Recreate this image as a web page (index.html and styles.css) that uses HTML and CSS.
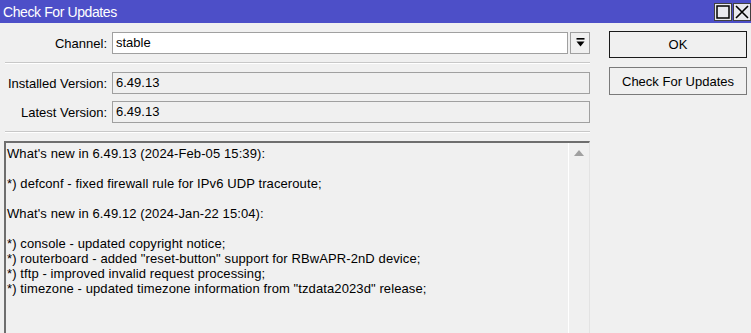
FILE: index.html
```html
<!DOCTYPE html>
<html lang="en">
<head>
    <meta charset="UTF-8">
    <title>Check For Updates</title>
    <link rel="stylesheet" href="styles.css">
</head>
<body>
    <div class="titlebar">
        <span class="title">Check For Updates</span>
        <div class="title-buttons">
            <span class="tb-btn">
                <svg width="14" height="14" viewBox="0 0 14 14"><rect x="1" y="1" width="12" height="12" fill="none" stroke="#000" stroke-width="1.5"/></svg>
            </span>
            <span class="tb-btn">
                <svg width="14" height="14" viewBox="0 0 14 14"><path d="M1 1 L13 13 M13 1 L1 13" stroke="#000" stroke-width="1.6"/></svg>
            </span>
        </div>
    </div>

    <div class="window">
        <div class="main">
            <div class="row">
                <label class="label">Channel:</label>
                <div class="field-wrap">
                    <div class="field white">stable</div>
                    <span class="drop-btn">
                        <svg width="9" height="10" viewBox="0 0 9 10"><rect x="0.5" y="0" width="8" height="1.6" fill="#000"/><path d="M0.5 3.5 H8.5 L4.5 8.5 Z" fill="#000"/></svg>
                    </span>
                </div>
            </div>
            <div class="sep"></div>
            <div class="row">
                <label class="label">Installed Version:</label>
                <div class="field">6.49.13</div>
            </div>
            <div class="row second">
                <label class="label">Latest Version:</label>
                <div class="field">6.49.13</div>
            </div>
            <div class="sep"></div>
            <div class="notes">
                <div class="notes-text">What's new in 6.49.13 (2024-Feb-05 15:39):<br>
<br>
*) defconf - fixed firewall rule for IPv6 UDP traceroute;<br>
<br>
What's new in 6.49.12 (2024-Jan-22 15:04):<br>
<br>
*) console - updated copyright notice;<br>
*) routerboard - added "reset-button" support for RBwAPR-2nD device;<br>
*) tftp - improved invalid request processing;<br>
*) timezone - updated timezone information from "tzdata2023d" release;</div>
                <div class="scrollbar">
                    <span class="arrow-up"></span>
                </div>
            </div>
        </div>

        <div class="side">
            <button class="btn default">OK</button>
            <button class="btn">Check For Updates</button>
        </div>
    </div>
</body>
</html>
```

FILE: styles.css
```css
body {
    margin: 0;
    padding: 0;
    width: 751px;
    height: 333px;
    overflow: hidden;
    background-color: #f0f0f0;
    font-family: "Liberation Sans", Arial, sans-serif;
    font-size: 13px;
    color: #000;
}

.titlebar {
    display: flex;
    justify-content: space-between;
    align-items: center;
    height: 23px;
    background-color: #4d4fc8;
    color: #fff;
    padding-left: 3px;
}

.title {
    font-size: 14px;
    letter-spacing: -0.4px;
}

.title-buttons {
    display: flex;
    gap: 1px;
    align-self: flex-start;
    margin-top: 3px;
}

.tb-btn {
    display: flex;
    align-items: center;
    justify-content: center;
    width: 16px;
    height: 16px;
    background-color: #e8e8ee;
    border: 1px solid #404040;
}

.window {
    display: flex;
    padding-left: 4px;
}

.main {
    width: 586px;
    padding-top: 9px;
}

.row {
    display: flex;
    align-items: center;
    height: 22px;
}

.row.second {
    margin-top: 7px;
}

.label {
    width: 103px;
    text-align: right;
    padding-right: 5px;
    flex-shrink: 0;
}

.field-wrap {
    display: flex;
    flex: 1;
    gap: 2px;
    height: 22px;
}

.field {
    flex: 1;
    height: 22px;
    box-sizing: border-box;
    border: 1px solid #a0a0a0;
    padding-left: 3px;
    line-height: 20px;
    background-color: #f0f0f0;
}

.field.white {
    background-color: #fff;
}

.drop-btn {
    display: flex;
    align-items: center;
    justify-content: center;
    width: 20px;
    height: 22px;
    box-sizing: border-box;
    border: 1px solid #a0a0a0;
    background-color: #f0f0f0;
}

.sep {
    height: 1px;
    margin: 8px 0 8px 1px;
    background-color: #c8c8c8;
    border-bottom: 1px solid #fff;
}

.notes {
    display: flex;
    height: 200px;
    box-sizing: border-box;
    border-top: 2px solid #6e6e6e;
    border-left: 2px solid #6e6e6e;
    border-right: 1px solid #e3e3e3;
}

.notes-text {
    flex: 1;
    padding: 3px 0 0 1px;
    line-height: 15px;
    white-space: nowrap;
    letter-spacing: 0.1px;
}

.scrollbar {
    width: 20px;
    border-left: 1px solid #fff;
    display: flex;
    justify-content: center;
}

.arrow-up {
    margin-top: 7px;
    width: 0;
    height: 0;
    border-left: 5px solid transparent;
    border-right: 5px solid transparent;
    border-bottom: 6px solid #a0a0a0;
}

.side {
    display: flex;
    flex-direction: column;
    gap: 9px;
    padding-top: 8px;
    margin-left: 19px;
}

.btn {
    width: 138px;
    height: 28px;
    font-family: "Liberation Sans", Arial, sans-serif;
    font-size: 13px;
    background-color: #f0f0f0;
    border: 1px solid #7a7a7a;
    padding: 0;
    color: #000;
}

.btn.default {
    height: 27px;
    border: 1px solid #1a1a1a;
}
```
